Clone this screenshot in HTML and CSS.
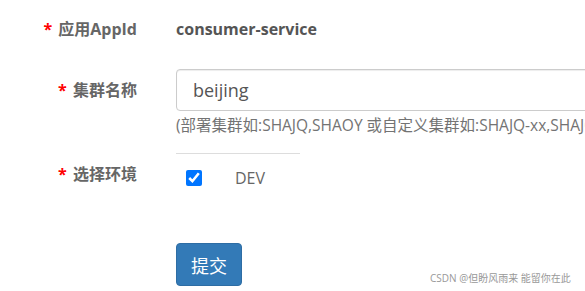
FILE: index.html
```html
<!DOCTYPE html>
<html lang="zh-CN">
<head>
<meta charset="utf-8">
<title>集群</title>
<link rel="stylesheet" href="styles.css">
</head>
<body>
<form class="form">
  <div class="row row-appid">
    <label class="label"><span class="req">*</span> 应用AppId</label>
    <div class="control value">consumer-service</div>
  </div>
  <div class="row row-cluster">
    <label class="label"><span class="req">*</span> 集群名称</label>
    <div class="control">
      <input class="text-input" type="text" value="beijing">
      <div class="help">(部署集群如:SHAJQ,SHAOY 或自定义集群如:SHAJQ-xx,SHAJQ-yy)</div>
    </div>
  </div>
  <div class="row row-env">
    <label class="label"><span class="req">*</span> 选择环境</label>
    <div class="control env-box">
      <label class="env"><input class="check" type="checkbox" checked><span class="env-name">DEV</span></label>
    </div>
  </div>
  <div class="row row-submit">
    <div class="label"></div>
    <div class="control"><button class="btn" type="button">提交</button></div>
  </div>
</form>
<div class="watermark">CSDN @但盼风雨来 能留你在此</div>
</body>
</html>
```
FILE: styles.css
```css
html, body {
  margin: 0;
  padding: 0;
  width: 585px;
  height: 291px;
  overflow: hidden;
  background: #fff;
  font-family: "Open Sans", "Noto Sans CJK SC", sans-serif;
}
.form {
  padding-top: 18px;
}
.row {
  display: grid;
  grid-template-columns: 137px 1fr;
  column-gap: 39px;
}
.label {
  text-align: right;
  font-size: 16px;
  font-weight: bold;
  color: #666;
  line-height: 22px;
  white-space: nowrap;
}
.req {
  color: #f00;
  margin-right: 2px;
}
.value {
  font-size: 16px;
  font-weight: bold;
  color: #555;
  line-height: 22px;
}
.row-cluster {
  margin-top: 29px;
}
.row-cluster .label {
  padding-top: 10px;
}
.text-input {
  display: block;
  box-sizing: border-box;
  width: 460px;
  height: 42px;
  padding: 0 16px;
  border: 1px solid #ccc;
  border-radius: 4px;
  font-family: inherit;
  font-size: 18px;
  color: #555;
  outline: none;
  box-shadow: inset 0 1px 1px rgba(0,0,0,0.075);
}
.help {
  margin-top: 4px;
  font-size: 15.5px;
  line-height: 20px;
  color: #737373;
  white-space: nowrap;
}
.row-env {
  margin-top: 18px;
}
.row-env .label {
  padding-top: 10px;
}
.env-box {
  width: 124px;
  border-top: 1px solid #ddd;
  padding-top: 12px;
}
.env {
  display: flex;
  align-items: center;
  height: 24px;
}
.check {
  width: 16px;
  height: 16px;
  margin: 0 33px 0 10px;
  accent-color: #0075ff;
}
.env-name {
  font-size: 16px;
  color: #666;
}
.row-submit {
  margin-top: 53px;
}
.btn {
  width: 66px;
  height: 43px;
  background: #337ab7;
  border: 1px solid #2e6da4;
  border-radius: 4px;
  color: #fff;
  font-family: inherit;
  font-size: 18px;
  padding: 0;
}
.watermark {
  position: absolute;
  left: 430px;
  top: 271px;
  font-size: 10px;
  color: #999;
  line-height: 14px;
  white-space: nowrap;
}
```
